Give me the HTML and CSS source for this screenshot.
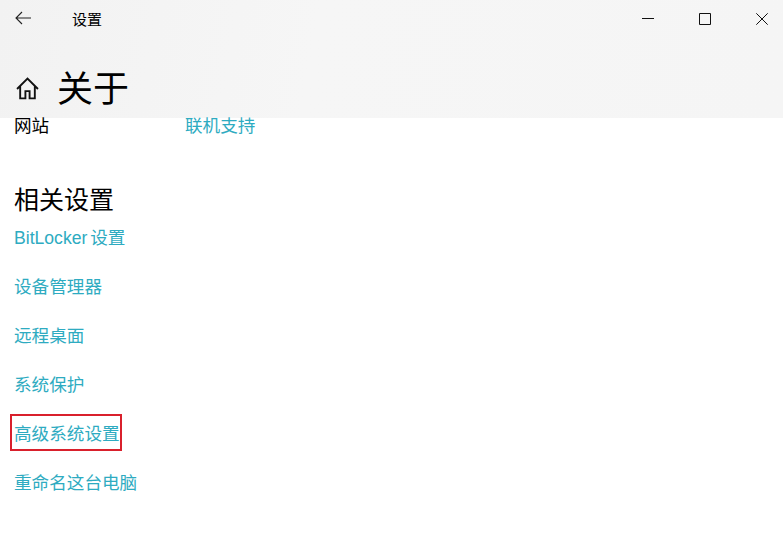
FILE: index.html
```html
<!DOCTYPE html>
<html lang="zh-CN">
<head>
<meta charset="utf-8">
<meta name="viewport" content="width=device-width, initial-scale=1">
<title>设置</title>
<link rel="stylesheet" href="styles.css">
</head>
<body>
<header class="top">
  <div class="titlebar">
    <svg class="back" viewBox="0 0 16 14"><path d="M7 1 1 7l6 6M1 7h15"/></svg>
    <span class="app-name">设置</span>
    <div class="controls">
      <svg viewBox="0 0 12 12"><path d="M0 5.5h12"/></svg>
      <svg viewBox="0 0 12 12"><path d="M.5.5h11v11H.5z"/></svg>
      <svg viewBox="0 0 12 12"><path d="M.3.3l11.4 11.4M11.700.3.300 11.700"/></svg>
    </div>
  </div>
  <div class="page-head">
    <svg class="home" viewBox="0 0 22 22"><path d="M1 11.500 11 1.500l10 10M4 8.500V20.500h5v-7h4v7h5V8.500"/></svg>
    <h1>关于</h1>
  </div>
</header>

<main class="content">
  <div class="site-row">
    <span class="site-label">网站</span>
    <a class="link" href="#">联机支持</a>
  </div>

  <h2>相关设置</h2>
  <ul class="links">
    <li><a class="link" href="#">BitLocker 设置</a></li>
    <li><a class="link" href="#">设备管理器</a></li>
    <li><a class="link" href="#">远程桌面</a></li>
    <li><a class="link" href="#">系统保护</a></li>
    <li><a class="link marked" href="#">高级系统设置</a></li>
    <li><a class="link" href="#">重命名这台电脑</a></li>
  </ul>
</main>
</body>
</html>
```

FILE: styles.css
```css
body {
  margin: 0;
  background-color: #fff;
  color: #000;
  font-family: "Liberation Sans", "Noto Sans CJK SC", sans-serif;
}
.top {
  height: 118px;
  background: linear-gradient(100deg, #f2f2f2, #f6f6f6 40%, #f5f5f5);
}
.titlebar {
  display: flex;
  align-items: center;
  height: 37px;
  padding: 0 15px;
}
.back {
  width: 16px;
  height: 14px;
  margin-bottom: 2px;
  fill: none;
  stroke: #222;
  stroke-width: 1.1;
}
.app-name {
  margin-left: 41px;
  font-size: 15px;
}
.controls {
  display: flex;
  gap: 45px;
  margin-left: auto;
}
.controls svg {
  width: 12px;
  height: 12px;
  fill: none;
  stroke: #111;
  stroke-width: 1;
}
.page-head {
  display: flex;
  align-items: center;
  height: 50px;
  margin-top: 24px;
  padding-left: 16px;
}
.home {
  width: 23px;
  height: 23px;
  margin-top: 4px;
  fill: none;
  stroke: #111;
  stroke-width: 1.8;
}
h1 {
  margin: 0 0 0 18px;
  font-size: 36px;
  font-weight: 400;
}
.content {
  padding-left: 14px;
}
.site-row {
  display: flex;
  font-size: 17.6px;
  line-height: 16px;
  height: 16px;
}
.site-label {
  width: 171px;
}
.link {
  color: #2eabc1;
  text-decoration: none;
  word-spacing: -2px;
}
h2 {
  margin: 50px 0 0;
  font-size: 25px;
  font-weight: 400;
  line-height: 32px;
}
.links {
  list-style: none;
  margin: 10px 0 0;
  padding: 0;
}
.links li {
  height: 49px;
  font-size: 17.6px;
  line-height: 24px;
}
.marked {
  position: relative;
}
.marked::after {
  content: "";
  position: absolute;
  top: -10px;
  bottom: -7px;
  left: -4px;
  right: -2px;
  border: 2px solid #d9202c;
}
```
